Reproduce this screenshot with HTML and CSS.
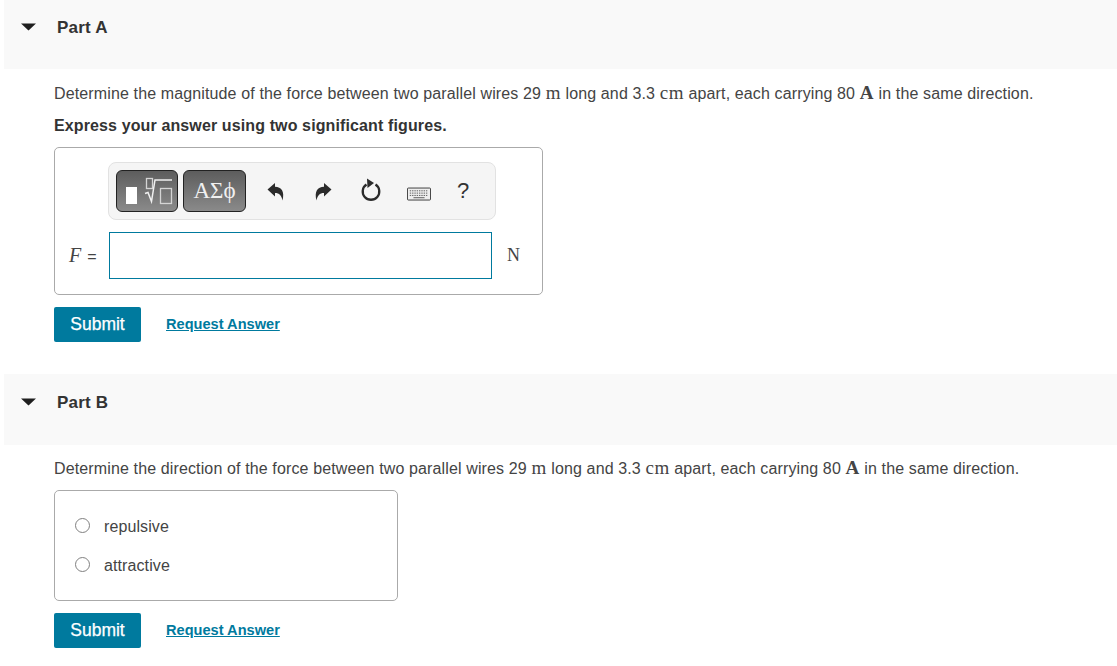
FILE: index.html
```html
<!DOCTYPE html>
<html lang="en">
<head>
<meta charset="utf-8">
<title>Parts</title>
<link rel="stylesheet" href="styles.css">
</head>
<body>
<section class="part part-a">
  <header class="part-head">
    <svg class="caret" width="15" height="8" viewBox="0 0 15 8"><path d="M0 0.5H15L7.5 7.5Z"/></svg>
    <h2 class="part-title">Part A</h2>
  </header>
  <div class="part-body">
    <p class="question">Determine the magnitude of the force between two parallel wires 29 <span class="unit">m</span> long and 3.3 <span class="unit">cm</span> apart, each carrying 80 <span class="unit bold">A</span> in the same direction.</p>
    <p class="instruction">Express your answer using two significant figures.</p>
    <div class="answer-box">
      <div class="toolbar">
        <button class="tpl-btn tpl-math" type="button" aria-label="Templates">
          <svg class="tpl-icon" width="60" height="40" viewBox="0 0 60 40">
            <rect x="9" y="16" width="11" height="17" fill="#fff"/>
            <rect x="29.500" y="7.500" width="6" height="10" fill="none" stroke="#d4d4d4" stroke-width="1.300"/>
            <path d="M28 22.500l3-1 3.500 9 3.500-21.500h17" fill="none" stroke="#f0f0f0" stroke-width="1.500"/>
            <rect x="43.500" y="17.500" width="11" height="15" fill="none" stroke="#d4d4d4" stroke-width="1.300"/>
          </svg>
        </button>
        <button class="tpl-btn tpl-greek" type="button">ΑΣϕ</button>
        <span class="tool tool-undo">
          <svg width="18" height="20" viewBox="0 0 18 20"><path d="M0.500 7.500L8 1V4.800C14.500 5 17.800 9.500 15.500 18.500C14.500 13.500 12.500 11 8 11V14.500Z" fill="#2b2b2b"/></svg>
        </span>
        <span class="tool tool-redo">
          <svg width="18" height="20" viewBox="0 0 18 20"><path d="M17.500 7.500L10 1V4.800C3.500 5 0.200 9.500 2.500 18.500C3.500 13.500 5.500 11 10 11V14.500Z" fill="#2b2b2b"/></svg>
        </span>
        <span class="tool tool-reset">
          <svg width="22" height="24" viewBox="0 0 22 24"><path d="M6.500 6.500A8.300 8.300 0 1 0 15.500 6.500" fill="none" stroke="#2b2b2b" stroke-width="2.300"/><path d="M7 0.500L14 5L7.500 10Z" fill="#2b2b2b"/></svg>
        </span>
        <span class="tool tool-keys">
          <svg width="26" height="15" viewBox="0 0 26 15"><rect x="0.500" y="0.500" width="25" height="13" rx="1" fill="#eee" stroke="#333"/><path d="M3 3.500h20M3 6h20M3 8.500h20" stroke="#555" stroke-dasharray="1.500 1" fill="none"/><path d="M7 11h12" stroke="#555"/></svg>
        </span>
        <span class="tool tool-help">?</span>
      </div>
      <div class="answer-row">
        <span class="answer-label"><i>F</i> <span class="eq">=</span></span>
        <input class="answer-input" type="text" aria-label="F">
        <span class="answer-unit">N</span>
      </div>
    </div>
    <div class="actions">
      <button class="submit" type="button">Submit</button>
      <a class="request" href="#">Request Answer</a>
    </div>
  </div>
</section>
<section class="part part-b">
  <header class="part-head">
    <svg class="caret" width="15" height="8" viewBox="0 0 15 8"><path d="M0 0.500H15L7.500 7.500Z"/></svg>
    <h2 class="part-title">Part B</h2>
  </header>
  <div class="part-body">
    <p class="question">Determine the direction of the force between two parallel wires 29 <span class="unit">m</span> long and 3.3 <span class="unit">cm</span> apart, each carrying 80 <span class="unit bold">A</span> in the same direction.</p>
    <div class="choice-box">
      <label class="choice"><span class="radio"></span><span>repulsive</span></label>
      <label class="choice"><span class="radio"></span><span>attractive</span></label>
    </div>
    <div class="actions">
      <button class="submit" type="button">Submit</button>
      <a class="request" href="#">Request Answer</a>
    </div>
  </div>
</section>
</body>
</html>
```
FILE: styles.css
```css
* { box-sizing: border-box; }
html, body { margin: 0; height: 666px; overflow: hidden; background: #fff; }
body { font-family: "Liberation Sans", Arial, sans-serif; font-size: 16px; color: #444; }
.part-head { margin-left: 4px; background: #f9f9f9; display: flex; align-items: flex-start; padding: 18px 0 0 17px; }
.part-a .part-head { height: 69px; }
.part-b .part-head { height: 71px; padding-top: 19px; }
.caret { fill: #1f1f1f; margin-top: 5px; flex: none; }
.part-title { margin: 0 0 0 21px; font-size: 17px; line-height: 20px; font-weight: 700; letter-spacing: 0.2px; color: #333; }
.part-body { padding: 0 0 0 54px; }
.part-a .part-body { padding-top: 15px; }
.part-b .part-body { padding-top: 14px; }
.part-a { height: 374px; }
.question { margin: 0; line-height: 20px; white-space: nowrap; letter-spacing: 0.13px; }
.unit { font-family: "Liberation Serif", serif; font-size: 19px; line-height: 16px; letter-spacing: 0.5px; }
.bold { font-weight: 700; }
.instruction { margin: 12px 0 0; line-height: 20px; font-weight: 700; letter-spacing: 0.12px; color: #333; }
.answer-box { margin-top: 11px; width: 489px; height: 148px; border: 1px solid #aaa; border-radius: 5px; padding: 14px 0 0 53px; }
.toolbar { width: 388px; height: 58px; background: #f5f5f5; border: 1px solid #e2e2e2; border-radius: 8px; display: flex; align-items: flex-start; padding: 7px 0 0 7px; }
.tpl-btn { height: 42px; padding: 0; border: 1px solid #222; border-radius: 6px; background: linear-gradient(#5d5d5d, #8a8a8a); display: block; color: #f0f0f0; }
.tpl-icon { display: block; }
.tpl-math { width: 62px; }
.tpl-greek { width: 63px; margin-left: 5px; font-family: "Liberation Serif", serif; font-size: 23px; }
.tool { width: 24px; display: flex; justify-content: center; color: #333; }
.tool-undo { margin-left: 18px; margin-top: 12px; }
.tool-redo { margin-left: 23px; margin-top: 12px; }
.tool-reset { margin-left: 24px; margin-top: 8px; }
.tool-keys { margin-left: 24px; margin-top: 17px; }
.tool-help { margin-left: 20px; margin-top: 9px; font-size: 22px; line-height: 24px; }
.answer-row { display: flex; align-items: center; margin: 12px 0 0 -39px; }
.answer-label { width: 40px; font-family: "Liberation Serif", serif; font-size: 20px; white-space: nowrap; }
.eq { font-family: "Liberation Sans", sans-serif; font-size: 16px; margin-left: 1px; }
.answer-input { width: 383px; height: 47px; border: 1px solid #007a9e; background: #fff; padding: 0; outline: none; flex: none; }
.answer-unit { margin-left: 15px; font-family: "Liberation Serif", serif; font-size: 18px; }
.actions { display: flex; align-items: center; margin-top: 12px; }
.submit { width: 87px; height: 35px; padding: 0; border: 0; border-radius: 2px; background: #007a9e; color: #fff; font: 400 17.500px/35px "Liberation Sans", sans-serif; -webkit-text-stroke: 0.25px #fff; }
.request { margin: 0 0 2px 25px; color: #007a9e; font-size: 14.600px; font-weight: 700; text-decoration: underline; }
.choice-box { margin-top: 11px; width: 344px; height: 111px; border: 1px solid #aaa; border-radius: 5px; padding: 16px 0 0 20px; }
.choice { display: flex; align-items: center; height: 39px; color: #444; letter-spacing: 0.1px; }
.radio { width: 15px; height: 15px; border: 1.500px solid #808080; border-radius: 50%; margin-right: 14px; margin-top: -3px; background: #fff; }
```
